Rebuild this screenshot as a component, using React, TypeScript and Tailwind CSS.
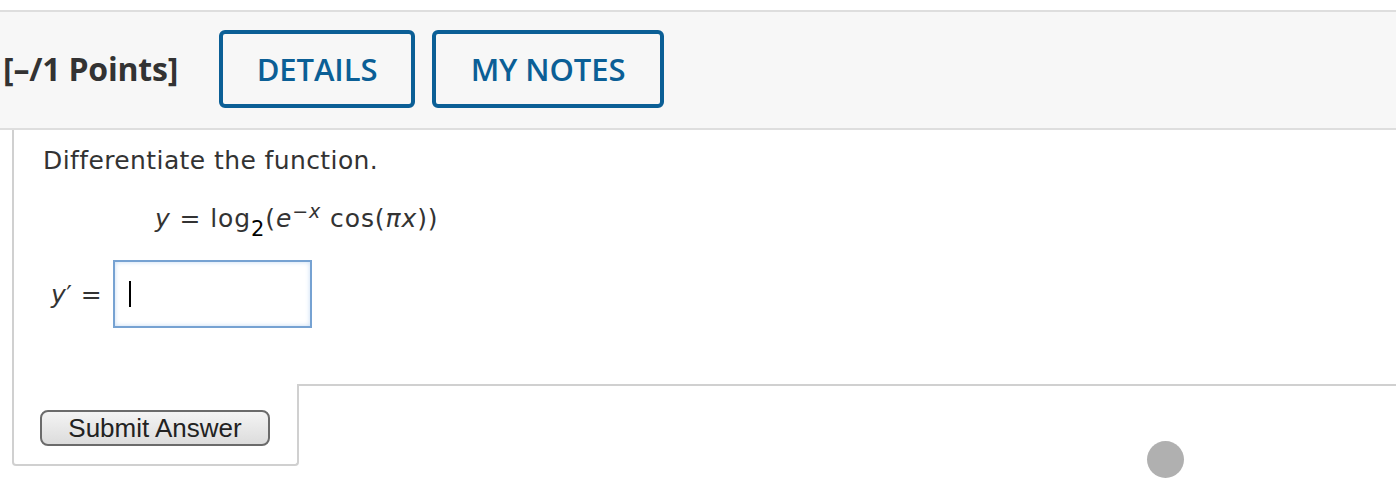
export default function App() {
  return (
    <div className="relative w-[1396px] h-[490px] bg-white overflow-hidden">
      {/* header band */}
      <div className="mt-[10px] h-[120px] bg-[#f7f7f7] border-y-2 border-[#dedede] flex items-center pl-[3px] font-['Open_Sans',sans-serif]">
        <span className="text-[32px] font-bold text-[#333] tracking-[-0.2px] w-[216px] mt-[-2px]">[–/1 Points]</span>
        <button className="w-[196px] h-[78px] mt-[-2px] border-[4px] border-[#0b5f96] rounded-[6px] text-[31px] font-semibold text-[#0b5f96] tracking-[-0.1px] mr-[17px]">
          DETAILS
        </button>
        <button className="w-[232px] h-[78px] mt-[-2px] border-[4px] border-[#0b5f96] rounded-[6px] text-[31px] font-semibold text-[#0b5f96] tracking-[-0.1px]">
          MY NOTES
        </button>
      </div>

      {/* question body */}
      <div className="ml-[12px] border-l-2 border-[#d0d0d0] h-[254px] pl-[29px] pt-[16px] font-['DejaVu_Sans',Verdana,sans-serif] text-[#333] text-[25px] tracking-[0.4px]">
        <p className="leading-[30px]">Differentiate the function.</p>
        <p className="mt-[28px] ml-[112px] leading-[30px] whitespace-nowrap tracking-[0.9px]">
          <i>y</i> = log<span className="relative top-[9px] text-[21px] text-black">2</span>(<i>e</i>
          <span className="relative top-[-9px] text-[19px]">−<i>x</i></span> cos(<i>π</i><i>x</i>))
        </p>
        <div className="mt-[25px] flex items-center">
          <span className="ml-[8px] w-[62px] mt-[2px]"><i>y</i>′ =</span>
          <div className="w-[199px] h-[68px] border-2 border-[#76a2d2] bg-white shadow-[inset_0_0_5px_#c6dcf4] flex items-center pl-[14px]">
            <div className="w-[2px] h-[26px] bg-black" />
          </div>
        </div>
      </div>

      {/* bottom row */}
      <div className="flex">
        <div className="ml-[12px] w-[287px] h-[82px] border-l-2 border-b-2 border-r-2 border-[#d0d0d0] rounded-b-[4px] pl-[26px] pt-[26px]">
          <button className="w-[230px] h-[36px] rounded-[8px] border-2 border-[#6b6b6b] bg-gradient-to-b from-[#f4f4f4] to-[#dcdcdc] text-[26px] leading-[30px] text-[#222] font-['Liberation_Sans',Arial,sans-serif]">
            Submit Answer
          </button>
        </div>
        <div className="flex-1 border-t-2 border-[#d0d0d0]" />
      </div>

      <div className="absolute left-[1147px] top-[441px] w-[37px] h-[37px] rounded-full bg-[#b0b0b0]" />
    </div>
  );
}
